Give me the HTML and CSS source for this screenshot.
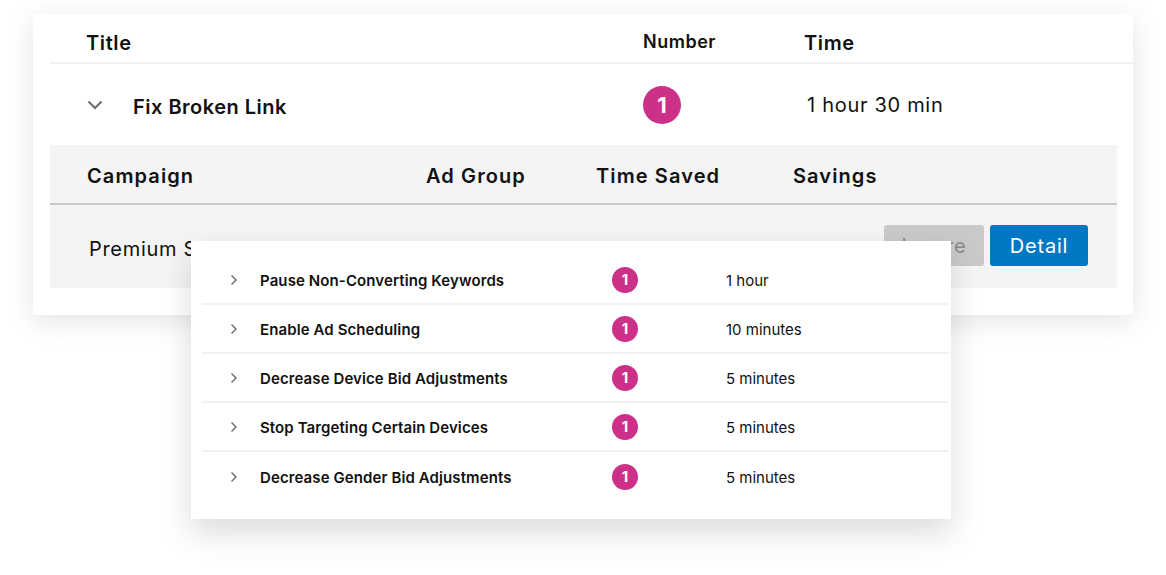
FILE: index.html
```html
<!DOCTYPE html>
<html>
<head>
<meta charset="utf-8">
<link rel="stylesheet" href="styles.css">
</head>
<body>
<div class="stage">
  <div class="card main">
    <div class="trow thead">
      <div class="c-title">Title</div>
      <div class="c-num small">Number</div>
      <div class="c-time">Time</div>
    </div>
    <div class="trow tbody">
      <div class="c-title">
        <svg class="chev-down" width="16" height="10" viewBox="0 0 16 10"><polyline points="1.5,1.5 8,8 14.5,1.5" fill="none" stroke="#6b6b6b" stroke-width="2"/></svg>
        <span class="title-text">Fix Broken Link</span>
      </div>
      <div class="c-num"><span class="badge big">1</span></div>
      <div class="c-time reg">1 hour 30 min</div>
    </div>
    <div class="panel">
      <div class="prow phead">
        <div class="p-camp">Campaign</div>
        <div class="p-ad">Ad Group</div>
        <div class="p-ts">Time Saved</div>
        <div class="p-sav">Savings</div>
      </div>
      <div class="prow pbody">
        <div class="p-camp">Premium Shoes</div>
        <div class="p-ad">Running</div>
        <div class="p-ts">30 min</div>
        <div class="p-sav"></div>
        <div class="actions">
          <button class="btn ignore">Ignore</button>
          <button class="btn detail">Detail</button>
        </div>
      </div>
    </div>
  </div>

  <div class="card popup">
    <div class="irow">
      <svg class="chev" width="8" height="12" viewBox="0 0 8 12"><polyline points="1.5,1.5 6,6 1.5,10.5" fill="none" stroke="#666" stroke-width="1.4"/></svg>
      <div class="i-title">Pause Non-Converting Keywords</div>
      <div class="i-num"><span class="badge">1</span></div>
      <div class="i-time">1 hour</div>
    </div>
    <div class="irow">
      <svg class="chev" width="8" height="12" viewBox="0 0 8 12"><polyline points="1.5,1.5 6,6 1.5,10.5" fill="none" stroke="#666" stroke-width="1.4"/></svg>
      <div class="i-title">Enable Ad Scheduling</div>
      <div class="i-num"><span class="badge">1</span></div>
      <div class="i-time">10 minutes</div>
    </div>
    <div class="irow">
      <svg class="chev" width="8" height="12" viewBox="0 0 8 12"><polyline points="1.5,1.5 6,6 1.5,10.5" fill="none" stroke="#666" stroke-width="1.4"/></svg>
      <div class="i-title">Decrease Device Bid Adjustments</div>
      <div class="i-num"><span class="badge">1</span></div>
      <div class="i-time">5 minutes</div>
    </div>
    <div class="irow">
      <svg class="chev" width="8" height="12" viewBox="0 0 8 12"><polyline points="1.5,1.5 6,6 1.5,10.5" fill="none" stroke="#666" stroke-width="1.4"/></svg>
      <div class="i-title">Stop Targeting Certain Devices</div>
      <div class="i-num"><span class="badge">1</span></div>
      <div class="i-time">5 minutes</div>
    </div>
    <div class="irow last">
      <svg class="chev" width="8" height="12" viewBox="0 0 8 12"><polyline points="1.5,1.5 6,6 1.5,10.5" fill="none" stroke="#666" stroke-width="1.4"/></svg>
      <div class="i-title">Decrease Gender Bid Adjustments</div>
      <div class="i-num"><span class="badge">1</span></div>
      <div class="i-time">5 minutes</div>
    </div>
  </div>
</div>
</body>
</html>
```

FILE: styles.css
```css
* { box-sizing: border-box; }
html, body { margin: 0; padding: 0; background: #fff; }
body {
  font-family: Inter, "Open Sans", "Liberation Sans", sans-serif;
  color: #111;
  width: 1166px;
  height: 575px;
  overflow: hidden;
}
.stage {
  position: relative;
  width: 1166px;
  height: 575px;
  padding-top: 14px;
}
.card { background: #fff; }
.main {
  margin-left: 33px;
  width: 1100px;
  height: 301px;
  padding-left: 17px;
  box-shadow: 0 6px 26px rgba(0,0,0,0.11);
}
.trow {
  display: grid;
  grid-template-columns: 557px 161px 1fr;
  padding-left: 36px;
}
.thead {
  height: 50px;
  align-items: end;
  padding-bottom: 7px;
  border-bottom: 2px solid #f1f1f1;
  font-size: 20px;
  font-weight: 600;
  line-height: 24px;
  letter-spacing: 0.6px;
}
.thead .small { font-size: 18px; position: relative; top: -1px; letter-spacing: 0.5px; }
.tbody {
  height: 81px;
  align-items: center;
  font-size: 20px;
}
.c-title { display: flex; align-items: center; }
.chev-down { margin-left: 1px; margin-right: 30px; }
.title-text { font-weight: 600; position: relative; top: 2px; letter-spacing: 0.5px; }
.reg { font-weight: 400; padding-left: 3px; letter-spacing: 0.7px; }
.badge {
  display: inline-flex;
  align-items: center;
  justify-content: center;
  width: 26px;
  height: 26px;
  border-radius: 50%;
  background: #cc3088;
  color: #fff;
  font-weight: 700;
  font-size: 15px;
  line-height: 1;
}
.badge.big { width: 38px; height: 38px; font-size: 22px; }

.panel {
  width: 1067px;
  height: 143px;
  background: #f4f4f4;
}
.prow {
  display: grid;
  grid-template-columns: 339px 170px 197px 1fr auto;
  padding-left: 37px;
  align-items: center;
  font-size: 20px;
  line-height: 24px;
}
.phead {
  height: 60px;
  padding-top: 3px;
  font-weight: 600;
  letter-spacing: 1.1px;
  border-bottom: 2px solid #c9c9c9;
}
.pbody {
  height: 83px;
  font-weight: 400;
  letter-spacing: 0.7px;
}
.pbody .p-camp { padding-left: 2px; position: relative; top: 2px; }
.pbody .p-ts, .pbody .p-sav, .pbody .p-ad { position: relative; top: 2px; }
.actions {
  display: flex;
  gap: 6px;
  margin-right: 29px;
  position: relative;
  top: -1px;
}
.btn {
  font-family: inherit;
  font-size: 20px;
  letter-spacing: 0.8px;
  border: none;
  border-radius: 3px;
  height: 41px;
  padding: 0;
}
.ignore { width: 100px; background: #c9c9c9; color: #8a8a8a; }
.detail { width: 98px; background: #0277c3; color: #fff; }

.popup {
  position: absolute;
  left: 191px;
  top: 241px;
  width: 760px;
  height: 278px;
  padding: 15px 2px 0 11px;
  box-shadow: 0 14px 30px rgba(0,0,0,0.14);
}
.irow {
  display: grid;
  grid-template-columns: 58px 352px 114px 1fr;
  align-items: center;
  height: 49px;
  border-bottom: 2px solid #f1f1f1;
  font-size: 15px;
}
.irow.last { border-bottom: none; }
.chev { margin-left: 28px; }
.i-title { font-weight: 600; position: relative; top: 1px; letter-spacing: 0.1px; }
.i-time { font-weight: 400; position: relative; top: 1px; }
```
